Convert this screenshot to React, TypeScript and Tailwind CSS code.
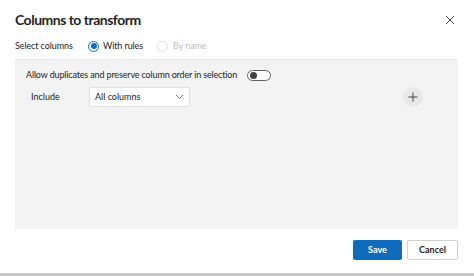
import React, { useState } from 'react';

const App: React.FC = () => {
  const [mode, setMode] = useState<'rules' | 'name'>('rules');
  const [dupes, setDupes] = useState(false);

  return (
    <div className="w-[474px] h-[276px] bg-white flex flex-col text-[#242424]" style={{ fontFamily: 'Lato, "Noto Sans", sans-serif' }}>
      <div className="flex-1 flex flex-col px-[15px] pr-[16px]">
        {/* Header */}
        <div className="flex items-center justify-between pt-[8px] h-[32px]">
          <h1 className="text-[14px] font-bold leading-none tracking-[-0.5px]">Columns to transform</h1>
          <button className="w-[14px] h-[14px] mr-[1px] flex items-center justify-center text-[#424242]">
            <svg width="10" height="10" viewBox="0 0 10 10" fill="none" stroke="currentColor" strokeWidth="1">
              <path d="M1 1L9 9M9 1L1 9" />
            </svg>
          </button>
        </div>

        {/* Select columns */}
        <div className="flex items-center h-[26px] mt-[1px] text-[9px] tracking-[-0.1px]">
          <span className="w-[73px]">Select columns</span>
          <label className="flex items-center gap-[4px] cursor-pointer" onClick={() => setMode('rules')}>
            <span className="w-[11px] h-[11px] rounded-full border border-[#0f6cbd] flex items-center justify-center">
              {mode === 'rules' && <span className="w-[6px] h-[6px] rounded-full bg-[#0f6cbd]" />}
            </span>
            <span>With rules</span>
          </label>
          <label className="flex items-center gap-[5px] ml-[14px] text-[#bdbdbd]">
            <span className="w-[11px] h-[11px] rounded-full border border-[#e0e0e0]" />
            <span>By name</span>
          </label>
        </div>

        {/* Panel */}
        <div className="border-t border-[#ebebeb] border-l border-l-[#f0f0f0] pb-[2px]">
          <div className="h-[169px] bg-[#f3f3f3] pl-[10px] pr-[35px] pt-[9px]">
            <div className="flex items-center text-[9px] h-[12px] tracking-[-0.15px]">
              <span className="w-[221px] whitespace-nowrap">Allow duplicates and preserve column order in selection</span>
              <button
                onClick={() => setDupes(!dupes)}
                className={`w-[24px] h-[11px] rounded-full border border-[#616161] flex items-center px-[2px] ${dupes ? 'justify-end bg-[#0f6cbd]' : 'justify-start bg-white'}`}
              >
                <span className="w-[7px] h-[7px] rounded-full bg-[#424242]" />
              </button>
            </div>
            <div className="flex items-center mt-[6px] h-[20px]">
              <span className="w-[63px] pl-[5px] text-[9px]">Include</span>
              <div className="w-[101px] h-[20px] bg-white border border-[#e0e0e0] rounded-[2px] flex items-center justify-between px-[5px] text-[9px]">
                <span>All columns</span>
                <svg width="9" height="6" viewBox="0 0 9 6" fill="none" stroke="#616161" strokeWidth="0.9">
                  <path d="M1 1L4.5 4.5L8 1" />
                </svg>
              </div>
              <div className="flex-1" />
              <button className="w-[20px] h-[20px] rounded-full bg-[#e8e8e8] flex items-center justify-center text-[#424242]">
                <svg width="10" height="10" viewBox="0 0 10 10" fill="none" stroke="currentColor" strokeWidth="1">
                  <path d="M5 0.5V9.5M0.5 5H9.5" />
                </svg>
              </button>
            </div>
          </div>
        </div>

        {/* Footer */}
        <div className="flex justify-end gap-[5px] mt-[9px]">
          <button className="w-[49px] h-[20px] bg-[#0f6cbd] text-white text-[9px] font-bold rounded-[2px]">Save</button>
          <button className="w-[51px] h-[20px] bg-white border border-[#d1d1d1] text-[9px] font-bold rounded-[2px]">Cancel</button>
        </div>
      </div>
      <div className="h-[3px] bg-[#c8c8c8]" />
    </div>
  );
};

export default App;
